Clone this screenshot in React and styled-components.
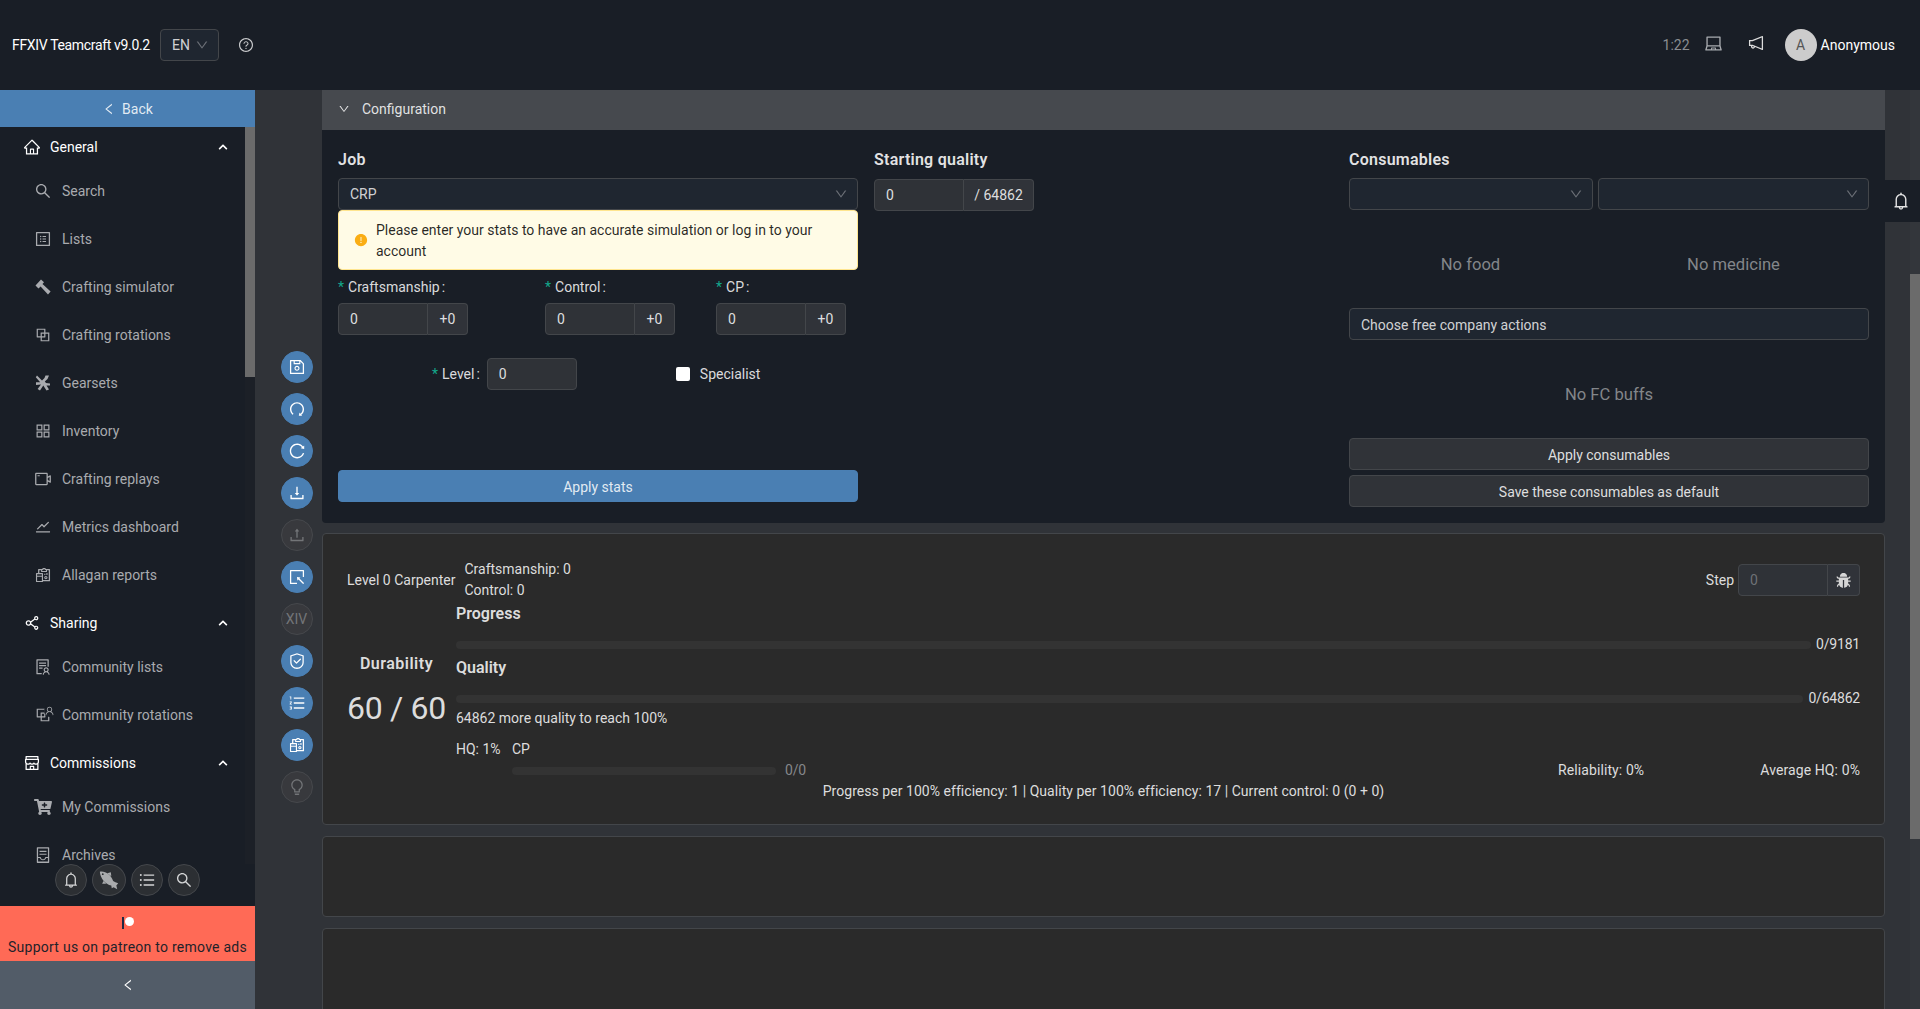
import React from 'react';
import styled, { createGlobalStyle } from 'styled-components';
import {
  AiOutlineHome, AiOutlineSearch, AiOutlineProfile, AiOutlineBlock, AiOutlineAppstore,
  AiOutlineVideoCamera, AiOutlineStock, AiOutlineReconciliation, AiOutlineShareAlt,
  AiOutlineSolution, AiOutlineShop, AiOutlineContainer, AiOutlineBell, AiOutlineUnorderedList,
  AiOutlineSave, AiOutlineReload, AiOutlineRedo, AiOutlineDownload, AiOutlineUpload, AiOutlineSelect,
  AiOutlineSafety, AiOutlineOrderedList, AiOutlineBulb, AiFillBug, AiOutlineLaptop,
  AiOutlineNotification, AiOutlineQuestionCircle, AiFillExclamationCircle, AiOutlineDown,
  AiOutlineLeft, AiOutlineUser,
} from 'react-icons/ai';
import { FaCartPlus, FaChevronUp } from 'react-icons/fa';

const dark = '#191e26';
const blue = '#4a7fb3';

const Global = createGlobalStyle`
  html, body { margin: 0; height: 100%; overflow: hidden; background: #303338; }
  body { font-family: Roboto, "Open Sans", sans-serif; font-size: 14px; line-height: 21px; color: rgba(255,255,255,.85); }
  * { box-sizing: border-box; }
`;

const Page = styled.div`
  width: 1920px;
  height: 1009px;
  display: grid;
  grid-template-rows: 90px 1fr;
  grid-template-columns: 255px 1fr;
`;
const Header = styled.header`
  grid-column: 1 / 3;
  background: ${dark};
  display: flex;
  align-items: center;
  padding: 0 25px 0 12px;
`;
const Title = styled.span`
  color: #fff;
  margin-right: 11px;
  width: 137px;
  white-space: nowrap;
  letter-spacing: -.34px;
`;
const Select = styled.div`
  height: 32px;
  background: #1f2630;
  border: 1px solid #43464a;
  border-radius: 4px;
  display: flex;
  align-items: center;
  justify-content: space-between;
  padding: 0 9px 0 11px;
  color: rgba(255,255,255,.8);
  svg { color: #6c7077; font-size: 14px; }
`;
const LangSelect = styled(Select)`
  width: 59px;
`;
const HelpIcon = styled(AiOutlineQuestionCircle)`
  margin-left: 19px;
  font-size: 16px;
  color: #c9cacc;
`;
const Spacer = styled.div`
  flex: 1;
`;
const Clock = styled.span`
  color: #8a8d91;
  margin-right: 14px;
`;
const TopIcon = styled.span`
  display: flex;
  font-size: ${p => p.$size || 18}px;
  color: ${p => p.$color || '#a8abaf'};
  margin: -4px ${p => p.$right || 24}px 0 0;
`;
const Avatar = styled.span`
  width: 32px;
  height: 32px;
  border-radius: 50%;
  background: #ccc;
  color: #555;
  display: flex;
  align-items: center;
  justify-content: center;
  margin-right: 4px;
`;
const UserName = styled.span`
  color: #fff;
`;

const Sidebar = styled.aside`
  background: ${dark};
  display: flex;
  flex-direction: column;
  height: 919px;
`;
const BackBar = styled.div`
  height: 37px;
  background: ${blue};
  color: rgba(255,255,255,.85);
  display: flex;
  align-items: center;
  justify-content: center;
  gap: 6px;
  padding-top: 1px;
  svg { font-size: 14px; }
`;
const MenuWrap = styled.div`
  height: 737px;
  display: flex;
  overflow: hidden;
`;
const Menu = styled.nav`
  width: 245px;
`;
const MenuTrack = styled.div`
  width: 10px;
  background: #1c2027;
`;
const MenuThumb = styled.div`
  height: 250px;
  background: #6b6b6b;
`;
const GroupTitle = styled.div`
  height: 40px;
  margin-bottom: 4px;
  display: flex;
  align-items: center;
  padding: 0 17px 0 23px;
  color: #fff;
  gap: 9px;
  svg:first-child { font-size: 18px; }
`;
const GroupArrow = styled(FaChevronUp)`
  margin-left: auto;
  font-size: 10px;
`;
const Item = styled.div`
  height: 40px;
  margin-bottom: 8px;
  display: flex;
  align-items: center;
  padding-left: 34px;
  gap: 10px;
  color: #a9abaf;
  svg { width: 18px; height: 18px; flex: none; }
`;
const QuickBar = styled.div`
  height: 42px;
  display: flex;
  padding-left: 55px;
  gap: 5px;
`;
const QuickButton = styled.div`
  width: ${p => p.$wide ? 34 : 32}px;
  height: 32px;
  border-radius: 50%;
  background: #2c2f33;
  border: 1px solid #44474b;
  color: #d4d5d6;
  display: flex;
  align-items: center;
  justify-content: center;
  font-size: 18px;
`;
const FishMark = styled.svg`
  width: 22px;
  height: 22px;
  color: #a9abad;
`;
const Patreon = styled.div`
  height: 55px;
  background: #ff6a56;
  color: #1e222a;
  display: flex;
  flex-direction: column;
  align-items: center;
  padding-top: 10px;
  letter-spacing: .25px;
  white-space: nowrap;
`;
const PatreonMark = styled.svg`
  width: 16px;
  height: 14px;
  margin-bottom: 7px;
`;
const Collapse = styled.div`
  flex: 1;
  background: #525c68;
  color: #fff;
  display: flex;
  align-items: center;
  justify-content: center;
  font-size: 14px;
`;

const Main = styled.main`
  position: relative;
  display: grid;
  grid-template-columns: 67px 1563px 25px 10px;
  height: 919px;
  overflow: hidden;
`;
const Rail = styled.div`
  display: flex;
  flex-direction: column;
  align-items: center;
  gap: 10px;
  padding: 261px 0 0 16px;
`;
const RoundButton = styled.div`
  width: 32px;
  height: 32px;
  flex: none;
  border-radius: 50%;
  display: flex;
  align-items: center;
  justify-content: center;
  font-size: ${p => p.$text ? 14 : 18}px;
  background: ${p => p.$off ? '#38393d' : blue};
  border: 1px solid ${p => p.$off ? '#46484c' : blue};
  color: ${p => p.$off ? '#737578' : '#fff'};
`;
const Content = styled.div`
  display: flex;
  flex-direction: column;
`;
const PanelHead = styled.div`
  height: 40px;
  background: #46494e;
  display: flex;
  align-items: center;
  padding: 0 0 2px 16px;
  gap: 12px;
  flex: none;
  svg { font-size: 12px; }
`;
const PanelBody = styled.div`
  height: 393px;
  flex: none;
  background: ${dark};
  border-radius: 0 0 4px 4px;
  padding: 16px;
  display: grid;
  grid-template-columns: 520px 459px 520px;
  gap: 16px;
`;
const Column = styled.div`
  display: flex;
  flex-direction: column;
`;
const Heading = styled.div`
  font-size: 16px;
  font-weight: 600;
  line-height: 24px;
  margin: 2px 0 6px;
  letter-spacing: .25px;
  color: rgba(255,255,255,.88);
`;
const Alert = styled.div`
  height: 60px;
  background: #fffbe6;
  border: 1px solid #ffe58f;
  border-radius: 4px;
  color: rgba(0,0,0,.85);
  display: flex;
  align-items: center;
  padding: 2px 37px 0 15px;
  gap: 8px;
  svg { font-size: 14px; margin-top: -2px; color: #faad14; flex: none; }
`;
const StatGrid = styled.div`
  display: grid;
  grid-template-columns: 207px 171px 1fr;
  margin-top: 7px;
`;
const Label = styled.div`
  margin-bottom: 5px;
  color: rgba(255,255,255,.85);
`;
const Star = styled.span`
  color: #13a88c;
  margin-right: 4px;
`;
const Colon = styled.span`
  margin-left: 2px;
`;
const InputGroup = styled.div`
  display: flex;
  height: 32px;
  width: ${p => p.$width || 130}px;
  margin-top: ${p => p.$top || 0}px;
`;
const Input = styled.div`
  flex: 1;
  background: #2f3237;
  border: 1px solid #43464a;
  border-radius: 4px;
  padding: 0 11px;
  display: flex;
  align-items: center;
  color: ${p => p.$muted ? '#6e7176' : 'rgba(255,255,255,.85)'};
`;
const GroupedInput = styled(Input)`
  border-radius: 4px 0 0 4px;
  flex: none;
  width: ${p => p.$width || 90}px;
`;
const Addon = styled.div`
  flex: 1;
  background: #303339;
  border: 1px solid #43464a;
  border-left: 0;
  border-radius: 0 4px 4px 0;
  display: flex;
  align-items: center;
  justify-content: center;
  svg { font-size: 17px; color: #d6d6d6; }
`;
const LevelRow = styled.div`
  display: flex;
  align-items: center;
  padding-left: 94px;
  margin-top: 23px;
  height: 32px;
`;
const LevelInput = styled(Input)`
  flex: none;
  width: 90px;
  height: 32px;
  margin: 0 99px 0 7px;
`;
const Checkbox = styled.span`
  width: 14px;
  height: 14px;
  border-radius: 2px;
  background: #fff;
  margin-right: 10px;
`;
const Button = styled.div`
  height: 32px;
  flex: none;
  display: flex;
  align-items: center;
  justify-content: center;
  border-radius: 4px;
  background: #303338;
  border: 1px solid #43464a;
  padding-top: 2px;
  margin-top: ${p => p.$top || 0}px;
`;
const PrimaryButton = styled(Button)`
  background: ${blue};
  border-color: ${blue};
`;
const TwoSelects = styled.div`
  display: grid;
  grid-template-columns: 244px 1fr;
  gap: 5px;
`;
const EmptyRow = styled.div`
  display: grid;
  grid-template-columns: ${p => p.$two ? '243px 1fr' : '1fr'};
  gap: 6px;
  margin: 43px 0 31px;
`;
const EmptyText = styled.div`
  font-size: 16.6px;
  line-height: 24px;
  text-align: center;
  color: #83868a;
`;
const FreeCompany = styled(Select)`
  padding-top: 2px;
`;

const Card = styled.section`
  flex: none;
  margin-top: ${p => p.$top}px;
  height: ${p => p.$height}px;
  background: #2a2a2a;
  border: 1px solid #43464a;
  border-radius: 4px;
`;
const SimCard = styled(Card)`
  padding: 24px 24px 0;
`;
const TopRow = styled.div`
  display: flex;
  align-items: center;
  height: 44px;
`;
const StatList = styled.div`
  margin-left: 9px;
`;
const StepLabel = styled.span`
  margin-right: 4px;
`;
const SimRow = styled.div`
  display: grid;
  grid-template-columns: 109px 1fr;
  height: 178px;
`;
const DurabilityCol = styled.div`
  padding: 50px 10px 0 0;
  text-align: center;
`;
const BoldTitle = styled.div`
  font-size: 16px;
  font-weight: 600;
  line-height: 24px;
  letter-spacing: ${p => p.$wide ? '.5px' : 0};
  color: rgba(255,255,255,.85);
`;
const Durability = styled.div`
  font-size: 32px;
  line-height: 40px;
  margin-top: 12px;
  letter-spacing: -.3px;
  white-space: nowrap;
`;
const BarRow = styled.div`
  display: flex;
  align-items: center;
  gap: 5px;
  height: ${p => p.$height || 21}px;
  margin: ${p => p.$margin || 0};
  span { letter-spacing: -.2px; }
`;
const Track = styled.div`
  flex: ${p => p.$width ? 'none' : 1};
  width: ${p => p.$width || 0}px;
  height: 8px;
  border-radius: 4px;
  background: #333;
`;
const Muted = styled.span`
  color: #85878a;
  margin-left: 4px;
`;
const QualityNote = styled.div`
  margin-top: -1px;
`;
const BottomRow = styled.div`
  display: flex;
  margin-top: 10px;
`;
const HqCol = styled.div`
  width: 56px;
`;
const CpCol = styled.div`
  width: 310px;
`;
const RightStats = styled.div`
  margin-left: auto;
  display: flex;
  gap: 116px;
  align-items: flex-end;
  padding-top: 19px;
  letter-spacing: .1px;
`;
const Centered = styled.div`
  text-align: center;
  letter-spacing: .04px;
  padding-top: 1px;
`;
const PageTrack = styled.div`
  grid-column: 4;
  background: #33363b;
  padding-top: 184px;
`;
const PageThumb = styled.div`
  height: 565px;
  background: #6b6b6b;
`;
const BellTab = styled.div`
  position: absolute;
  left: 1630px;
  top: 90px;
  width: 35px;
  height: 42px;
  background: ${dark};
  display: flex;
  align-items: center;
  padding-left: 6px;
  font-size: 20px;
  color: #e4e4e4;
`;
const IconStack = styled.span`
  position: relative;
  display: inline-flex;
`;
const IconBadge = styled(AiOutlineUser)`
  position: absolute;
  right: -3px;
  top: -1px;
  background: ${dark};
  border-radius: 50%;
  width: 11px !important;
  height: 12px !important;
`;

const HammerIcon = () => (
  <svg viewBox="-1 -1 18 18" fill="currentColor">
    <path d="M0.5 6.5 L6 0.5 L9 3.2 L7.5 5 L15.6 12.5 L13 15.5 L5.6 7.4 L3.5 9.4 Z" />
  </svg>
);
const GearIcon = () => (
  <svg viewBox="-1 -1 18 18" fill="currentColor">
    <path d="M2 0.5 L7 5.5 L9.5 3 L10.5 0.5 L14 0.5 L12.5 4 L9.8 6.6 L11 8 L15 8.5 L15 10.5 L11.5 10.5 L14 14.5 L11.5 15.5 L8.3 10.5 L5 15.5 L2.6 14 L6 9.6 L1 10 L1 7.2 L5.2 7.2 L0.8 2.2 Z" />
  </svg>
);
const FishIcon = () => (
  <FishMark viewBox="0 0 24 24" fill="currentColor">
    <path d="M2 3 C8 2 14 6 16.5 13 L19 14.5 L22 15.5 L20 18 L21 22 L17 20 L15 21 L14.5 18 C8 17 2.5 10 2 3 Z" />
    <path d="M10 4.5 L14 3.5 L14.5 8 Z M6 13 L4.5 16 L9 16 Z" />
    <circle cx="5.2" cy="5.6" r="1" fill="#2c2f33" />
  </FishMark>
);

const ChevronSelect = ({ text }) => (
  <Select>
    <span>{text}</span>
    <AiOutlineDown />
  </Select>
);

const Field = ({ label }) => (
  <div>
    <Label><Star>*</Star>{label}<Colon>:</Colon></Label>
    <InputGroup>
      <GroupedInput>0</GroupedInput>
      <Addon>+0</Addon>
    </InputGroup>
  </div>
);

const App = () => (
  <Page>
    <Global />
    <Header>
      <Title>FFXIV Teamcraft v9.0.2</Title>
      <LangSelect>EN <AiOutlineDown /></LangSelect>
      <HelpIcon />
      <Spacer />
      <Clock>1:22</Clock>
      <TopIcon $size={19}><AiOutlineLaptop /></TopIcon>
      <TopIcon $size={18} $color="#dcdcdc" $right={20}><AiOutlineNotification /></TopIcon>
      <Avatar>A</Avatar>
      <UserName>Anonymous</UserName>
    </Header>

    <Sidebar>
      <BackBar><AiOutlineLeft /> Back</BackBar>
      <MenuWrap>
        <Menu>
          <GroupTitle><AiOutlineHome /> General <GroupArrow /></GroupTitle>
          <Item><AiOutlineSearch /> Search</Item>
          <Item><AiOutlineProfile /> Lists</Item>
          <Item><HammerIcon /> Crafting simulator</Item>
          <Item><AiOutlineBlock /> Crafting rotations</Item>
          <Item><GearIcon /> Gearsets</Item>
          <Item><AiOutlineAppstore /> Inventory</Item>
          <Item><AiOutlineVideoCamera /> Crafting replays</Item>
          <Item><AiOutlineStock /> Metrics dashboard</Item>
          <Item><AiOutlineReconciliation /> Allagan reports</Item>
          <GroupTitle><AiOutlineShareAlt /> Sharing <GroupArrow /></GroupTitle>
          <Item><AiOutlineSolution /> Community lists</Item>
          <Item><IconStack><AiOutlineBlock /><IconBadge /></IconStack> Community rotations</Item>
          <GroupTitle><AiOutlineShop /> Commissions <GroupArrow /></GroupTitle>
          <Item><FaCartPlus /> My Commissions</Item>
          <Item><AiOutlineContainer /> Archives</Item>
        </Menu>
        <MenuTrack><MenuThumb /></MenuTrack>
      </MenuWrap>
      <QuickBar>
        <QuickButton><AiOutlineBell /></QuickButton>
        <QuickButton $wide><FishIcon /></QuickButton>
        <QuickButton><AiOutlineUnorderedList /></QuickButton>
        <QuickButton><AiOutlineSearch /></QuickButton>
      </QuickBar>
      <Patreon>
        <PatreonMark viewBox="0 0 16 14">
          <rect x="2" y="1" width="2" height="12" fill="#1e2a44" />
          <circle cx="9.5" cy="5.5" r="4.5" fill="#fff" />
        </PatreonMark>
        Support us on patreon to remove ads
      </Patreon>
      <Collapse><AiOutlineLeft /></Collapse>
    </Sidebar>

    <Main>
      <Rail>
        <RoundButton><AiOutlineSave /></RoundButton>
        <RoundButton><AiOutlineRedo /></RoundButton>
        <RoundButton><AiOutlineReload /></RoundButton>
        <RoundButton><AiOutlineDownload /></RoundButton>
        <RoundButton $off><AiOutlineUpload /></RoundButton>
        <RoundButton><AiOutlineSelect /></RoundButton>
        <RoundButton $off $text>XIV</RoundButton>
        <RoundButton><AiOutlineSafety /></RoundButton>
        <RoundButton><AiOutlineOrderedList /></RoundButton>
        <RoundButton><AiOutlineReconciliation /></RoundButton>
        <RoundButton $off><AiOutlineBulb /></RoundButton>
      </Rail>

      <Content>
        <PanelHead><AiOutlineDown /> Configuration</PanelHead>
        <PanelBody>
          <Column>
            <Heading>Job</Heading>
            <ChevronSelect text="CRP" />
            <Alert>
              <AiFillExclamationCircle />
              <span>Please enter your stats to have an accurate simulation or log in to your account</span>
            </Alert>
            <StatGrid>
              <Field label="Craftsmanship" />
              <Field label="Control" />
              <Field label="CP" />
            </StatGrid>
            <LevelRow>
              <span><Star>*</Star>Level<Colon>:</Colon></span>
              <LevelInput>0</LevelInput>
              <Checkbox />
              <span>Specialist</span>
            </LevelRow>
            <PrimaryButton $top={80}>Apply stats</PrimaryButton>
          </Column>

          <Column>
            <Heading>Starting quality</Heading>
            <InputGroup $width={160} $top={1}>
              <GroupedInput>0</GroupedInput>
              <Addon>/ 64862</Addon>
            </InputGroup>
          </Column>

          <Column>
            <Heading>Consumables</Heading>
            <TwoSelects>
              <ChevronSelect />
              <ChevronSelect />
            </TwoSelects>
            <EmptyRow $two>
              <EmptyText>No food</EmptyText>
              <EmptyText>No medicine</EmptyText>
            </EmptyRow>
            <FreeCompany>Choose free company actions</FreeCompany>
            <EmptyRow><EmptyText>No FC buffs</EmptyText></EmptyRow>
            <Button>Apply consumables</Button>
            <Button $top={5}>Save these consumables as default</Button>
          </Column>
        </PanelBody>

        <SimCard $top={10} $height={292}>
          <TopRow>
            <span>Level 0 Carpenter</span>
            <StatList>
              <div>Craftsmanship: 0</div>
              <div>Control: 0</div>
            </StatList>
            <Spacer />
            <StepLabel>Step</StepLabel>
            <InputGroup $width={122}>
              <GroupedInput $muted>0</GroupedInput>
              <Addon><AiFillBug /></Addon>
            </InputGroup>
          </TopRow>
          <SimRow>
            <DurabilityCol>
              <BoldTitle $wide>Durability</BoldTitle>
              <Durability>60 / 60</Durability>
            </DurabilityCol>
            <div>
              <BoldTitle>Progress</BoldTitle>
              <BarRow $margin="8px 0 1px"><Track /><span>0/9181</span></BarRow>
              <BoldTitle>Quality</BoldTitle>
              <BarRow $margin="8px 0 0"><Track /><span>0/64862</span></BarRow>
              <QualityNote>64862 more quality to reach 100%</QualityNote>
              <BottomRow>
                <HqCol>HQ: 1%</HqCol>
                <CpCol>
                  <div>CP</div>
                  <BarRow><Track $width={264} /><Muted>0/0</Muted></BarRow>
                </CpCol>
                <RightStats>
                  <span>Reliability: 0%</span>
                  <span>Average HQ: 0%</span>
                </RightStats>
              </BottomRow>
            </div>
          </SimRow>
          <Centered>Progress per 100% efficiency: 1 | Quality per 100% efficiency: 17 | Current control: 0 (0 + 0)</Centered>
        </SimCard>

        <Card $top={11} $height={81} />
        <Card $top={11} $height={200} />
      </Content>

      <PageTrack><PageThumb /></PageTrack>
      <BellTab><AiOutlineBell /></BellTab>
    </Main>
  </Page>
);

export default App;
